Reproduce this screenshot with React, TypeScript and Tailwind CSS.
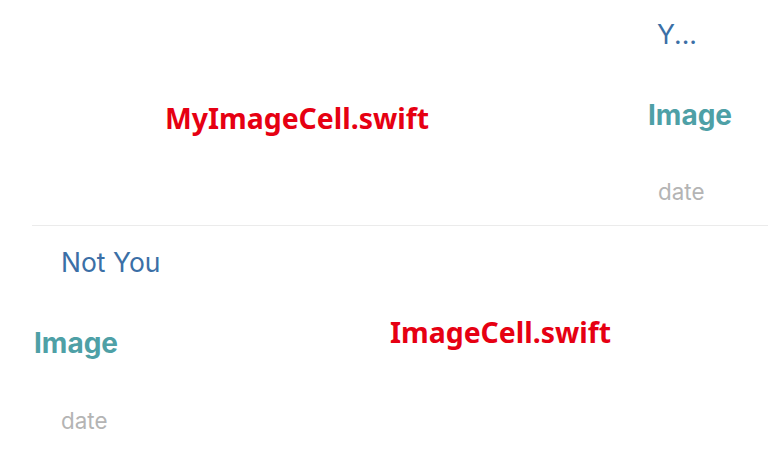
import React from "react";

const cellFont = { fontFamily: "Inter, 'Noto Sans', sans-serif" };
const labelFont = { fontFamily: "'Noto Sans', 'Open Sans', sans-serif" };

export default function App() {
  return (
    <div className="w-[768px] h-[451px] overflow-hidden bg-white" style={cellFont}>
      {/* my message cell */}
      <div className="ml-[32px] h-[226px] flex border-b border-[#ebebeb]">
        <div className="flex-1 flex items-start">
          <div
            className="ml-[133px] mt-[100px] text-[28.4px] leading-[36px] font-bold text-[#e60012]"
            style={labelFont}
          >
            MyImageCell.swift
          </div>
        </div>
        <div className="w-[120px] flex flex-col pt-[18px]">
          <div className="pl-[9px] text-[26.5px] leading-[32px] text-[#3b6fa6]">Y...</div>
          <div className="pl-0 mt-[49px] text-[28px] leading-[32px] font-bold text-[#4ea0a6]">Image</div>
          <div className="pl-[10px] mt-[47px] text-[22.4px] leading-[28px] text-[#b4b4b4]">date</div>
        </div>
      </div>
      {/* other message cell */}
      <div className="flex">
        <div className="w-[300px] flex flex-col pt-[20px]">
          <div className="pl-[61px] text-[26.5px] leading-[32px] text-[#3b6fa6]">Not You</div>
          <div className="pl-[34px] mt-[49px] text-[28px] leading-[32px] font-bold text-[#4ea0a6]">Image</div>
          <div className="pl-[61px] mt-[48px] text-[22.4px] leading-[28px] text-[#b4b4b4]">date</div>
        </div>
        <div
          className="ml-[90px] mt-[88px] text-[28.4px] leading-[36px] font-bold text-[#e60012]"
          style={labelFont}
        >
          ImageCell.swift
        </div>
      </div>
    </div>
  );
}
